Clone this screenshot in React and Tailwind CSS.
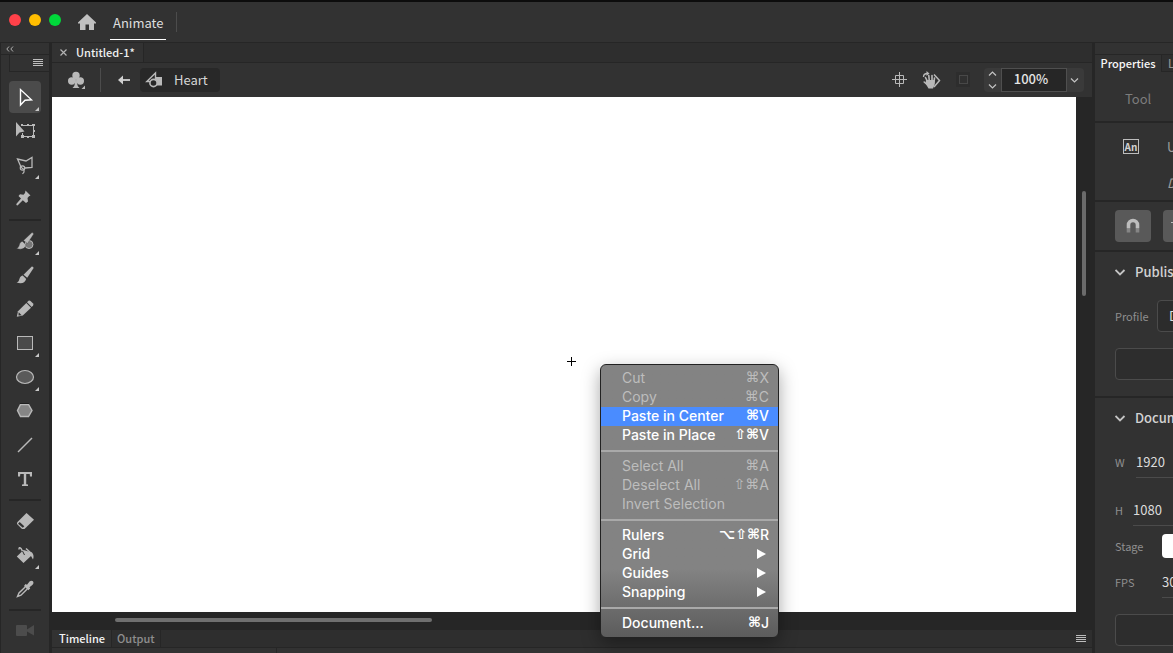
import React from "react";

const ui = "font-['Noto_Sans_CJK_SC','Noto_Sans',sans-serif]";

function Svg({ size = 20, className = "", children }) {
  return (
    <svg width={size} height={size} viewBox={`0 0 ${size} ${size}`} className={`block shrink-0 ${className}`} fill="none" aria-hidden="true">
      {children}
    </svg>
  );
}

const ICON = "#b9b9b9";

const toolGroups = [
  [
    {
      name: "Selection tool",
      active: true,
      more: true,
      icon: <path d="M5.500 2.500V18L10 13.300L16.500 12.800Z" stroke="#fff" strokeWidth="1.400" strokeLinejoin="miter" />,
    },
    {
      name: "Free transform tool",
      icon: (
        <>
          <path d="M7 4.500H18.500V15.500H7.500V12" stroke={ICON} />
          <path d="M1 1V15.500L4.500 11.500L9.500 10.500Z" fill={ICON} />
          <path d="M6 3h2v2H6zM12 3h2v2h-2zM17 3h3v2h-3zM18 9h2v2h-2zM17 14h3v3h-3zM12 15h2v2h-2zM6 14h3v3H6z" fill={ICON} />
        </>
      ),
    },
    {
      name: "Lasso tool",
      more: true,
      icon: (
        <>
          <path d="M6 12L2.500 4L11 6L17 2.500V12.500L10 13" stroke={ICON} strokeWidth="1.300" />
          <circle cx="7.500" cy="13" r="2.200" stroke={ICON} strokeWidth="1.200" />
          <path d="M5 11.500L9 14.500V17L7.500 19" stroke={ICON} strokeWidth="1.200" />
        </>
      ),
    },
    {
      name: "Asset warp tool",
      icon: <path d="M10.500 1.500L15.500 6.500L14 7.300L12.500 9L13 12.500L11 14L7.800 11.200L2.500 16.500L1.300 16L1.500 14.800L6 9.500L3.500 7L5 5.300L8.500 5.800L10 4Z" fill={ICON} />,
    },
  ],
  [
    {
      name: "Fluid brush tool",
      more: true,
      icon: (
        <>
          <circle cx="14" cy="13.500" r="4" fill="#777" stroke={ICON} />
          <path d="M17 1.500Q19 1.500 18.300 3.500L12.500 12.500L8.500 9.500Z" fill={ICON} stroke="#323232" strokeWidth=".3" />
          <path d="M7.600 10.500L11 13.800C10 18 6.500 19 1.500 17.500C4.300 16.700 4 14 5 12.100C5.600 11.100 6.600 10.500 7.600 10.500Z" fill={ICON} stroke="#323232" strokeWidth=".4" />
        </>
      ),
    },
    {
      name: "Classic brush tool",
      icon: (
        <>
          <path d="M16.800 1.500Q19 1.500 18.300 3.500L12.200 12.800L8.500 9.700Z" fill={ICON} />
          <path d="M7.700 10.500L11.200 14C10 18 6.500 19 1.500 17.500C4.300 17 4 14.500 5 12.600C5.600 11.600 6.600 10.500 7.700 10.500Z" fill={ICON} />
        </>
      ),
    },
    {
      name: "Pencil tool",
      icon: (
        <>
          <path d="M1.800 17.800L3 12.300L11.300 4L16 8.700L7.800 16.500Z" fill={ICON} />
          <path d="M12 3.200L13.500 1.800Q14.500 1 15.500 1.900L18.100 4.500Q18.800 5.500 18.100 6.500L16.700 8Z" fill={ICON} />
          <path d="M3.700 13.300L6.600 16.200L3.500 16.600Z" fill="#323232" />
        </>
      ),
    },
    {
      name: "Rectangle tool",
      more: true,
      icon: <rect x="2.500" y="3.500" width="15" height="13" fill="#4a4a4a" stroke={ICON} />,
    },
    {
      name: "Oval tool",
      more: true,
      icon: <ellipse cx="10" cy="10" rx="8.500" ry="6.500" fill="#5a5a5a" stroke={ICON} strokeWidth="1.200" />,
    },
    {
      name: "PolyStar tool",
      icon: (
        <>
          <path d="M5.500 3.500H13.500L17 9.500L13.500 15.500H5.500L2.500 9.500Z" fill="#858585" stroke={ICON} strokeWidth="1.400" />
          <path d="M5 2.500H14" stroke="#1f1f1f" />
        </>
      ),
    },
    {
      name: "Line tool",
      icon: <path d="M3 17L17 3" stroke={ICON} strokeWidth="1.500" />,
    },
    {
      name: "Text tool",
      icon: <path d="M3 3H17V7.500H15L14.700 5H11.200V15.300L13 15.600V17H7V15.600L8.800 15.300V5H5.300L5 7.500H3Z" fill={ICON} />,
    },
  ],
  [
    {
      name: "Eraser tool",
      icon: (
        <>
          <path d="M11.500 2L19 8.800L9.500 18H7L2 13V11.500Z" fill={ICON} />
          <path d="M3 12.700L4.700 11L9.300 15.300L7.800 16.800Z" fill="#323232" />
        </>
      ),
    },
    {
      name: "Paint bucket tool",
      more: true,
      icon: (
        <>
          <path d="M8.500 5L17 7.500Q19.500 10.500 18 14.500L16 11L8.500 18L1.800 11.500Z" fill={ICON} />
          <path d="M9.500 10L6 3.500Q4 1.500 4 4.500M11 3.500L16.500 8.500" stroke={ICON} strokeWidth="1.500" />
          <path d="M7.500 6L9.500 10" stroke="#323232" />
        </>
      ),
    },
    {
      name: "Eyedropper tool",
      icon: (
        <>
          <path d="M10.500 5L12 5.700L14.500 2.600Q16.300 1 18 2.300Q19.300 4 17.600 5.800L14.500 8.300L15.200 9.500L13.200 11.300L9 7Z" fill={ICON} />
          <path d="M10.200 8L4 14L2.500 17.500L6 16.200L12.200 10" stroke={ICON} strokeWidth="1.400" />
        </>
      ),
    },
  ],
  [
    {
      name: "Camera tool",
      icon: (
        <>
          <rect x="1" y="4" width="11" height="11" rx="1" fill="#4c4c4c" />
          <path d="M12 8.500L19 4V14.500L12 10.500Z" fill="#4c4c4c" />
        </>
      ),
    },
  ],
];

function Tool({ name, active, more, icon }) {
  return (
    <button
      type="button"
      aria-label={name}
      className={`relative flex size-8 items-center justify-center rounded ${active ? "bg-[#4b4b4b]" : ""}`}
    >
      <Svg>{icon}</Svg>
      {more && (
        <svg width="4" height="4" viewBox="0 0 4 4" className="absolute right-0.5 bottom-0.5" aria-hidden="true">
          <path d="M4 0V4H0Z" fill="#c8c8c8" />
        </svg>
      )}
    </button>
  );
}

function Lines() {
  return (
    <svg width="10" height="8" viewBox="0 0 10 8" className="block" aria-hidden="true">
      <path d="M0 .5H10M0 2.500H10M0 4.500H10M0 6.500H10" stroke="#bdbdbd" />
    </svg>
  );
}

function ToolPanel() {
  return (
    <aside className="flex w-[52px] shrink-0 flex-col border-r-[3px] border-l border-[#262626] bg-[#323232]">
      <div className="flex h-3 items-center border-b border-[#262626] pl-[5px]">
        <svg width="8" height="6" viewBox="0 0 8 6" aria-label="Collapse" role="img">
          <path d="M3 .5L.8 3L3 5.500M7 .5L4.800 3L7 5.500" stroke="#b0b0b0" fill="none" />
        </svg>
      </div>
      <div className="ml-2 flex h-[17px] items-center justify-end border-b border-l border-[#262626] pr-[6px]">
        <button type="button" aria-label="Tools menu">
          <Lines />
        </button>
      </div>
      <div className="flex flex-col px-2 pt-[9px]">
        {toolGroups.map((group, i) => (
          <React.Fragment key={i}>
            {i > 0 && <div className="my-1 h-0.5 bg-[#262626]" />}
            <div className="flex flex-col gap-0.5">
              {group.map((t) => (
                <Tool key={t.name} {...t} />
              ))}
            </div>
          </React.Fragment>
        ))}
      </div>
    </aside>
  );
}

function TitleBar() {
  return (
    <header className="flex h-[43px] shrink-0 border-t-2 border-b border-t-[#0c0c0c] border-b-[#262626] bg-[#323232] pl-[9px]">
      <div className="flex gap-2 pt-3">
        <span className="size-3 rounded-full bg-[#ff4149]" />
        <span className="size-3 rounded-full bg-[#ffbd00]" />
        <span className="size-3 rounded-full bg-[#00d83a]" />
      </div>
      <button type="button" aria-label="Home" className="ml-4 flex h-full items-center">
        <Svg>
          <path d="M10 2L19 10.500V11.500H17V18H12V12.500H8.500V18H3V11.500H1V10.500Z" fill="#c0c0c0" />
        </Svg>
      </button>
      <a href="#animate" className="ml-[13px] h-[38px] border-b border-white px-[3px] text-[13px] leading-[42px] text-[#dedede]">
        Animate
      </a>
      <div className="mt-[10px] ml-[10px] h-5 w-px bg-[#4c4c4c]" />
    </header>
  );
}

function EditBar() {
  return (
    <div className="flex h-[34px] shrink-0 items-center bg-[#323232] pr-2 pl-[14px]">
      <button type="button" aria-label="Edit scene">
        <Svg>
          <g fill={ICON}>
            <circle cx="10" cy="5.500" r="3.700" />
            <circle cx="5.700" cy="11" r="3.700" />
            <circle cx="14.300" cy="11" r="3.700" />
            <path d="M9.200 6H10.800L11 13Q11.300 16.500 13.500 18H6.500Q8.700 16.500 9 13Z" />
            <path d="M19 15.500V19H15.500Z" />
          </g>
        </Svg>
      </button>
      <div className="ml-[14px] h-6 w-px bg-[#4c4c4c]" />
      <button type="button" aria-label="Back" className="ml-[13px]">
        <Svg>
          <path d="M6 10H16" stroke="#d0d0d0" strokeWidth="1.800" />
          <path d="M9 5.500V14.500L4 10Z" fill="#d0d0d0" />
        </Svg>
      </button>
      <a href="#heart" className="ml-[6px] flex h-6 w-20 items-center gap-[10px] rounded-sm bg-[#282828] pl-1 text-[13px] leading-[22px] text-[#d6d6d6]">
        <Svg>
          <path d="M11 7H18V15.500H11Z" fill={ICON} />
          <circle cx="9.500" cy="13" r="3.600" fill="#282828" stroke={ICON} strokeWidth="1.600" />
          <path d="M11.500 9.500V3L2.800 11.500H6.500" stroke={ICON} strokeWidth="1.400" />
        </Svg>
        Heart
      </a>
      <div className="flex-1" />
      <div className="flex items-center gap-3">
        <button type="button" aria-label="Center stage">
          <Svg>
            <path d="M10.500 2V17M3 9.500H18M6.500 5.500H14.500V13.500H6.500Z" stroke={ICON} />
          </Svg>
        </button>
        <button type="button" aria-label="Rotate view">
          <Svg>
            <path d="M13 4.500L18.500 10.500L13 17" stroke={ICON} strokeWidth="1.500" />
            <path
              d="M4.500 7.500L6 10.500M7.800 5.500L8.200 10M11 5.500V10.500M13.500 8L13 12M3.200 12L5.500 14"
              stroke={ICON}
              strokeWidth="1.600"
              strokeLinecap="round"
            />
            <path d="M5 10H13.800V14L12 18.500H7.500L4.500 13.500Z" fill={ICON} />
            <path d="M2.500 7Q2.500 3.500 6.500 3.500" stroke={ICON} strokeWidth="1.300" />
            <path d="M5.500 1L8.500 3.500L5.500 6Z" fill={ICON} />
          </Svg>
        </button>
        <button type="button" aria-label="Clip content" disabled>
          <Svg>
            <rect x="3" y="2" width="14" height="15" fill="#2d2d2d" />
            <rect x="6.500" y="5.500" width="8" height="8" fill="#303030" stroke="#484848" />
          </Svg>
        </button>
      </div>
      <div className="ml-[11px] flex h-6 items-stretch rounded-sm bg-[#3a3a3a]">
        <div className="flex w-[17px] flex-col items-center justify-between py-[3px]">
          <button type="button" aria-label="Zoom in">
            <svg width="9" height="5" viewBox="0 0 9 5" className="block">
              <path d="M1 4.500L4.500 1L8 4.500" stroke="#c4c4c4" strokeWidth="1.200" fill="none" />
            </svg>
          </button>
          <button type="button" aria-label="Zoom out">
            <svg width="9" height="5" viewBox="0 0 9 5" className="block">
              <path d="M1 .5L4.500 4L8 .5" stroke="#c4c4c4" strokeWidth="1.200" fill="none" />
            </svg>
          </button>
        </div>
        <input
          aria-label="Zoom level"
          defaultValue="100%"
          className="w-[66px] border border-[#4f4f4f] bg-[#262626] pr-[6px] pb-[3px] text-center text-[13px] font-medium text-[#e4e4e4] outline-none"
        />
        <button type="button" aria-label="Zoom presets" className="flex w-[17px] items-center pl-[3px]">
          <svg width="9" height="5" viewBox="0 0 9 5" className="block">
            <path d="M1 .5L4.500 4L8 .5" stroke="#c4c4c4" strokeWidth="1.200" fill="none" />
          </svg>
        </button>
      </div>
    </div>
  );
}

const menu = [
  [
    { label: "Cut", keys: "⌘", letter: "X", off: true },
    { label: "Copy", keys: "⌘", letter: "C", off: true },
    { label: "Paste in Center", keys: "⌘", letter: "V", hot: true },
    { label: "Paste in Place", keys: "⇧⌘", letter: "V" },
  ],
  [
    { label: "Select All", keys: "⌘", letter: "A", off: true },
    { label: "Deselect All", keys: "⇧⌘", letter: "A", off: true },
    { label: "Invert Selection", off: true },
  ],
  [
    { label: "Rulers", keys: "⌥⇧⌘", letter: "R" },
    { label: "Grid", sub: true },
    { label: "Guides", sub: true },
    { label: "Snapping", sub: true },
  ],
  [{ label: "Document...", keys: "⌘", letter: "J" }],
];

function ContextMenu() {
  return (
    <div
      role="menu"
      className="absolute top-[364px] left-[600px] z-10 w-[179px] rounded-md border border-[#222] bg-linear-to-b from-[#838383] from-75% to-[#5c5c5c] py-1 font-['Inter',sans-serif] text-[14px] shadow-[0_6px_18px_rgba(0,0,0,0.35)]"
    >
      {menu.map((group, i) => (
        <React.Fragment key={i}>
          {i > 0 && <div className="my-[5px] h-0.5 bg-[#a9a9a9]" />}
          {group.map((m) => (
            <button
              key={m.label}
              type="button"
              role="menuitem"
              disabled={m.off}
              className={`flex h-[19px] w-full items-center justify-between pr-[9px] pb-0.5 pl-[21px] whitespace-nowrap ${
                m.off ? "text-[#bdbdbd]" : "font-medium text-white"
              } ${m.hot ? "bg-[#4a8cff]" : ""}`}
            >
              <span>{m.label}</span>
              {m.keys && (
                <span className="flex items-center">
                  <span className={`font-['DejaVu_Sans',sans-serif] ${m.off ? "" : "font-bold"}`}>{m.keys}</span>
                  {m.letter}
                </span>
              )}
              {m.sub && (
                <svg width="9" height="10" viewBox="0 0 9 10" className="mr-[3px]" aria-hidden="true">
                  <path d="M0 0L9 5L0 10Z" fill="#fff" />
                </svg>
              )}
            </button>
          ))}
        </React.Fragment>
      ))}
    </div>
  );
}

function Workspace() {
  return (
    <main className="flex min-w-0 flex-1 flex-col bg-[#262626]">
      <div className="flex h-5 shrink-0 border-b border-[#262626] bg-[#2e2e2e] text-[11px] leading-[19px] font-medium text-[#f0f0f0]">
        <div className="flex items-center gap-[9px] border-r border-[#262626] bg-[#323232] pr-2 pl-2">
          <button type="button" aria-label="Close document">
            <svg width="7" height="7" viewBox="0 0 7 7" className="block">
              <path d="M.5 .5L6.500 6.500M6.500 .5L.5 6.500" stroke="#b4b4b4" strokeWidth="1.200" />
            </svg>
          </button>
          <span>Untitled-1*</span>
        </div>
      </div>
      <EditBar />
      <div className="flex min-h-0 flex-1">
        <div className="flex flex-1 items-center justify-center bg-white pt-3 pl-[14px]">
          <Svg size={10}>
            <path d="M5.500 1V10M1 5.500H10" stroke="#000" />
          </Svg>
        </div>
        <div className="flex w-4 justify-center pt-[94px]">
          <div className="h-[105px] w-1 rounded-full bg-[#6b6b6b]" />
        </div>
      </div>
      <div className="h-[18px] shrink-0 pt-[6px] pl-[63px]">
        <div className="h-1 w-[317px] rounded-full bg-[#6f6f6f]" />
      </div>
      <div className="flex h-[17px] shrink-0 text-[11px] leading-[17px] font-medium">
        <button type="button" className="border-r border-[#262626] bg-[#323232] pr-[6px] pl-[7px] text-[#f4f4f4]">
          Timeline
        </button>
        <button type="button" className="border-r border-[#262626] bg-[#2e2e2e] px-[5px] text-[#8e8e8e]">
          Output
        </button>
        <div className="flex flex-1 items-center justify-end bg-[#2e2e2e] pr-[6px]">
          <button type="button" aria-label="Timeline menu">
            <Lines />
          </button>
        </div>
      </div>
      <div className="mt-px flex h-[5px] shrink-0 gap-px">
        <div className="w-56 bg-[#323232]" />
        <div className="flex-1 bg-[#323232]" />
      </div>
    </main>
  );
}

function Section({ title, children }) {
  return (
    <section className="border-b-2 border-[#262626] pt-3 pb-4 pl-5">
      <h2 className="flex h-4 items-center gap-[9px] text-[13px] font-medium text-[#d2d2d2]">
        <svg width="11" height="7" viewBox="0 0 11 7" aria-hidden="true">
          <path d="M.5 1L5 5.500L9.500 1" stroke="#c4c4c4" strokeWidth="1.800" fill="none" />
        </svg>
        {title}
      </h2>
      {children}
    </section>
  );
}

function Field({ id, label, value, className, gap }) {
  return (
    <div className={`flex items-center ${className}`}>
      <label htmlFor={id} className={`text-[11px] leading-4 text-[#8f8f8f] ${gap}`}>
        {label}
      </label>
      <input id={id} defaultValue={value} className="h-8 w-20 border-b border-[#4b4b4b] bg-transparent text-[13px] text-[#dcdcdc] outline-none" />
    </div>
  );
}

function Properties() {
  return (
    <aside className="w-[81px] shrink-0 overflow-hidden border-l-[3px] border-[#262626] bg-[#323232]">
      <div className="w-72">
        <div className="h-3 border-b border-[#262626]" />
        <div className="flex h-[17px] text-[11px] leading-[17px] font-medium">
          <button type="button" className="w-[67px] border-r border-[#262626] text-center text-[#f8f8f8]">
            Properties
          </button>
          <button type="button" className="flex-1 border-b border-[#262626] bg-[#2e2e2e] pl-[6px] text-left text-[#8e8e8e]">
            Library
          </button>
        </div>
        <div className="h-[51px] border-b-2 border-[#262626] pl-[30px] text-[13px] leading-[53px] text-[#7d7d7d]">Tool</div>
        <div className="flex h-[79px] gap-7 border-b-2 border-[#262626] pt-4 pl-7 text-[13px] text-[#9d9d9d]">
          <span className="flex h-[15px] w-4 items-center justify-center border border-[#bdbdbd] text-[10px] leading-none font-bold text-[#cfcfcf]">An</span>
          <div className="flex flex-col gap-4 leading-5">
            <span className="-mt-0.5">Untitled-1</span>
            <span className="italic">Document</span>
          </div>
        </div>
        <div className="flex h-[50px] gap-3 border-b-2 border-[#262626] pt-2 pl-5">
          <button type="button" aria-label="Snap to objects" className="flex h-8 w-9 items-center justify-center rounded bg-[#595959]">
            <Svg>
              <path d="M5.500 12.500V9A4.500 4.500 0 0 1 14.500 9V12.500" stroke="#bdbdbd" strokeWidth="3.600" />
              <path d="M5.500 13V16.500M14.500 13V16.500" stroke="#858585" strokeWidth="3.600" />
            </Svg>
          </button>
          <button type="button" aria-label="Snap align" className="flex h-8 w-9 items-center justify-center rounded bg-[#595959]">
            <Svg>
              <path d="M0 6.500H19M10 7V17" stroke="#bdbdbd" />
            </Svg>
          </button>
        </div>
        <Section title="Publish Settings">
          <div className="mt-5 flex h-8 items-center gap-[10px]">
            <label htmlFor="profile" className="w-8 text-[11px] leading-4 text-[#8f8f8f]">
              Profile
            </label>
            <select id="profile" className="h-8 w-40 appearance-none rounded border border-[#4b4b4b] bg-[#2c2c2c] pl-[11px] text-[13px] text-[#dcdcdc]">
              <option>Default</option>
            </select>
          </div>
          <button type="button" aria-label="More settings" className="mt-4 block h-8 w-52 rounded border border-[#4b4b4b] bg-[#2d2d2d]" />
        </Section>
        <Section title="Document Settings">
          <Field id="w" label="W" value="1920" gap="w-[21px]" className="mt-5" />
          <Field id="h" label="H" value="1080" gap="w-[18px]" className="mt-4" />
          <div className="mt-2 flex h-6 items-center">
            <label htmlFor="stage" className="w-[47px] text-[11px] leading-4 text-[#8f8f8f]">
              Stage
            </label>
            <button id="stage" type="button" aria-label="Stage color" className="h-6 w-9 rounded bg-white" />
          </div>
          <Field id="fps" label="FPS" value="30" gap="w-[47px]" className="mt-2" />
          <button type="button" aria-label="Advanced settings" className="mt-4 block h-8 w-52 rounded border border-[#4b4b4b] bg-[#2d2d2d]" />
        </Section>
      </div>
    </aside>
  );
}

export default function App() {
  return (
    <div className={`relative flex h-screen flex-col overflow-hidden bg-[#262626] ${ui}`}>
      <TitleBar />
      <div className="flex min-h-0 flex-1">
        <ToolPanel />
        <Workspace />
        <Properties />
      </div>
      <ContextMenu />
    </div>
  );
}
